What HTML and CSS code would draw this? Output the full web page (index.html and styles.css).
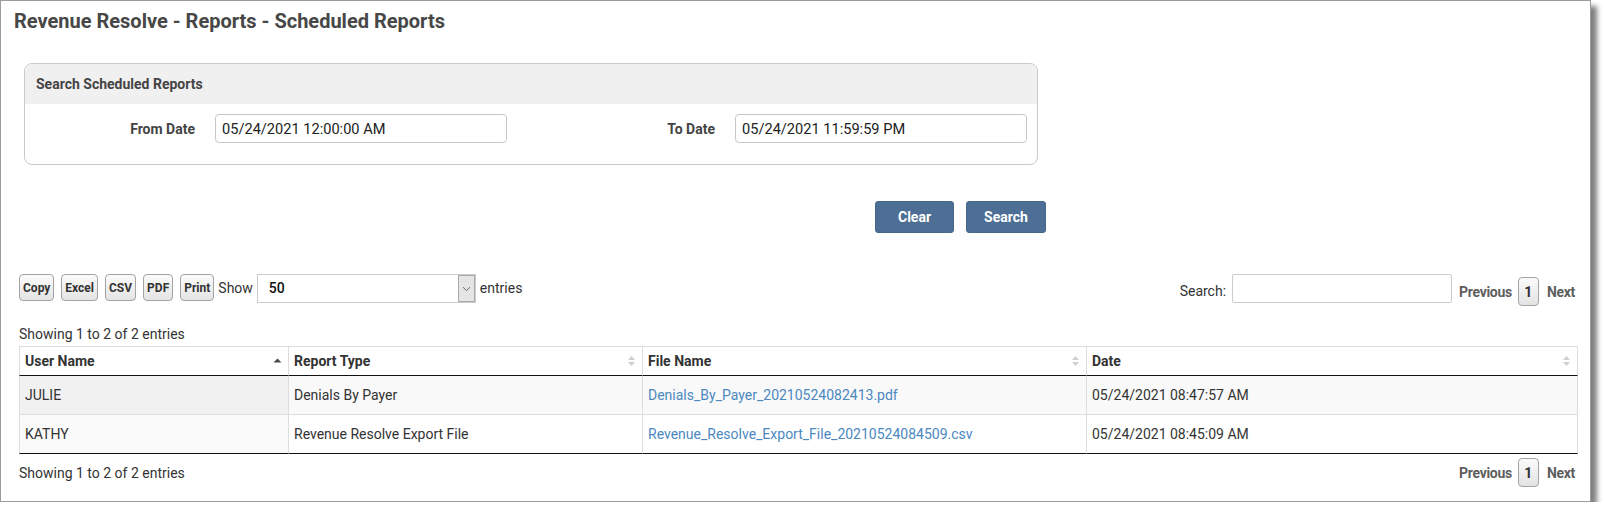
FILE: index.html
```html
<!DOCTYPE html>
<html lang="en">
<head>
<meta charset="utf-8">
<title>Revenue Resolve - Reports - Scheduled Reports</title>
<link rel="stylesheet" href="styles.css">
</head>
<body>
<div class="window">
  <h1 class="page-title">Revenue Resolve - Reports - Scheduled Reports</h1>

  <section class="panel">
    <div class="panel-head">Search Scheduled Reports</div>
    <div class="panel-body">
      <div class="field">
        <label class="field-label">From Date</label>
        <input class="field-input" type="text" value="05/24/2021 12:00:00 AM">
      </div>
      <div class="field">
        <label class="field-label">To Date</label>
        <input class="field-input" type="text" value="05/24/2021 11:59:59 PM">
      </div>
    </div>
  </section>

  <div class="actions">
    <button class="btn-primary btn-clear">Clear</button>
    <button class="btn-primary btn-search">Search</button>
  </div>

  <div class="dt">
    <div class="dt-top">
      <div class="dt-left">
        <button class="dt-btn">Copy</button>
        <button class="dt-btn">Excel</button>
        <button class="dt-btn">CSV</button>
        <button class="dt-btn">PDF</button>
        <button class="dt-btn">Print</button>
        <span class="dt-text show-label">Show</span>
        <div class="select">
          <span class="select-value">50</span>
          <span class="select-arrow">
            <svg width="9" height="6" viewBox="0 0 9 6"><path d="M1 1.2 L4.5 4.6 L8 1.2" fill="none" stroke="#6a6a6a" stroke-width="1"/></svg>
          </span>
        </div>
        <span class="dt-text entries-label">entries</span>
      </div>
      <div class="dt-right">
        <span class="dt-text search-label">Search:</span>
        <input class="search-input" type="text">
        <div class="pager pager-top">
          <span class="pager-link">Previous</span>
          <span class="pager-page">1</span>
          <span class="pager-link">Next</span>
        </div>
      </div>
    </div>

    <div class="dt-info info-top">Showing 1 to 2 of 2 entries</div>

    <table class="grid">
      <colgroup>
        <col class="col-user">
        <col class="col-type">
        <col class="col-file">
        <col class="col-date">
      </colgroup>
      <thead>
        <tr>
          <th class="first"><div class="hcell"><span>User Name</span>
            <svg class="sort" width="9" height="12" viewBox="0 0 9 12"><path d="M0.5 7.5 L4.5 3.5 L8.5 7.5 Z" fill="#4a4a4a"/></svg></div></th>
          <th><div class="hcell"><span>Report Type</span>
            <svg class="sort" width="9" height="12" viewBox="0 0 9 12"><path d="M1 5 L4.5 1 L8 5 Z M1 7 L4.5 11 L8 7 Z" fill="#cfcfcf"/></svg></div></th>
          <th><div class="hcell"><span>File Name</span>
            <svg class="sort" width="9" height="12" viewBox="0 0 9 12"><path d="M1 5 L4.5 1 L8 5 Z M1 7 L4.5 11 L8 7 Z" fill="#cfcfcf"/></svg></div></th>
          <th><div class="hcell"><span>Date</span>
            <svg class="sort" width="9" height="12" viewBox="0 0 9 12"><path d="M1 5 L4.5 1 L8 5 Z M1 7 L4.5 11 L8 7 Z" fill="#cfcfcf"/></svg></div></th>
        </tr>
      </thead>
      <tbody>
        <tr class="odd">
          <td class="first sorted"><div class="cell">JULIE</div></td>
          <td><div class="cell">Denials By Payer</div></td>
          <td><div class="cell"><a class="file-link" href="#">Denials_By_Payer_20210524082413.pdf</a></div></td>
          <td><div class="cell">05/24/2021 08:47:57 AM</div></td>
        </tr>
        <tr class="even">
          <td class="first sorted"><div class="cell">KATHY</div></td>
          <td><div class="cell">Revenue Resolve Export File</div></td>
          <td><div class="cell"><a class="file-link" href="#">Revenue_Resolve_Export_File_20210524084509.csv</a></div></td>
          <td><div class="cell">05/24/2021 08:45:09 AM</div></td>
        </tr>
      </tbody>
    </table>

    <div class="dt-bottom">
      <div class="dt-info">Showing 1 to 2 of 2 entries</div>
      <div class="pager">
        <span class="pager-link">Previous</span>
        <span class="pager-page">1</span>
        <span class="pager-link">Next</span>
      </div>
    </div>
  </div>
</div>
</body>
</html>
```

FILE: styles.css
```css
* { box-sizing: border-box; }

html, body {
  margin: 0;
  padding: 0;
  background: #ffffff;
}

body {
  font-family: Roboto, "Liberation Sans", Arial, sans-serif;
  font-size: 14px;
  color: #333333;
}

.window {
  width: 1591px;
  height: 502px;
  border: 1px solid #9c9c9c;
  background: #ffffff;
  box-shadow: 6px 6px 5px rgba(0, 0, 0, 0.5);
  padding-top: 8px;
}

.page-title {
  margin: 0 0 0 13px;
  font-size: 20px;
  line-height: 24px;
  font-weight: 700;
  color: #474747;
}

/* Search panel */
.panel {
  margin: 30px 0 0 23px;
  width: 1014px;
  border: 1px solid #c9c9c9;
  border-radius: 8px;
  overflow: hidden;
}

.panel-head {
  height: 40px;
  background: #f0f0f0;
  padding-left: 11px;
  display: flex;
  align-items: center;
  font-weight: 700;
  font-size: 14px;
  color: #444444;
}

.panel-body {
  display: flex;
  padding: 10px 0 21px;
}

.field {
  flex: 0 0 520px;
  display: grid;
  grid-template-columns: 170px 292px;
  column-gap: 20px;
  align-items: center;
}

.field-label {
  text-align: right;
  font-weight: 700;
  font-size: 14px;
  color: #444444;
}

.field-input {
  height: 29px;
  width: 292px;
  border: 1px solid #c7c7c7;
  border-radius: 4px;
  padding: 0 6px;
  font-family: Roboto, "Liberation Sans", Arial, sans-serif;
  font-size: 14.6px;
  color: #222222;
  background: #ffffff;
  outline: none;
}

/* Action buttons */
.actions {
  width: 1045px;
  margin-top: 36px;
  display: flex;
  justify-content: flex-end;
  gap: 12px;
}

.btn-primary {
  height: 32px;
  border: 1px solid #466787;
  border-radius: 3px;
  background: #4e6f95;
  color: #ffffff;
  font-family: Roboto, "Liberation Sans", Arial, sans-serif;
  font-size: 14px;
  font-weight: 700;
  padding: 0;
}

.btn-clear { width: 79px; }
.btn-search { width: 80px; }

/* Data table area */
.dt {
  margin: 41px 0 0 18px;
  width: 1559px;
}

.dt-top {
  height: 32px;
  display: flex;
  justify-content: space-between;
  align-items: flex-start;
}

.dt-left {
  display: flex;
  align-items: flex-start;
}

.dt-btn {
  height: 27px;
  margin-right: 7px;
  padding: 0 3px;
  border: 1px solid #a3a3a3;
  border-radius: 4px;
  background: linear-gradient(#fbfbfb, #e4e4e4);
  font-family: Roboto, "Liberation Sans", Arial, sans-serif;
  font-size: 12px;
  font-weight: 700;
  color: #333333;
}

.dt-btn:nth-of-type(5) { margin-right: 4px; }

.dt-text {
  line-height: 29px;
  font-size: 14px;
  color: #333333;
}

.show-label { margin-right: 4px; }
.entries-label { margin-left: 4px; }

.select {
  width: 219px;
  height: 29px;
  border: 1px solid #cccccc;
  background: #ffffff;
  display: flex;
  align-items: stretch;
  justify-content: space-between;
}

.select-value {
  padding-left: 11px;
  line-height: 27px;
  font-size: 14px;
  font-weight: 500;
  color: #111111;
}

.select-arrow {
  width: 17px;
  border: 1px solid #a9a9a9;
  background: #e5e5e5;
  display: flex;
  align-items: center;
  justify-content: center;
}

.dt-right {
  display: flex;
  align-items: flex-start;
}

.search-label {
  margin-top: 3px;
  margin-right: 6px;
}

.search-input {
  width: 220px;
  height: 29px;
  border: 1px solid #cccccc;
  border-radius: 2px;
  margin-right: 7px;
  outline: none;
}

.pager {
  height: 29px;
  display: flex;
  align-items: center;
  padding-right: 3px;
}

.pager-top { margin-top: 3px; }

.pager-link {
  font-weight: 700;
  font-size: 14px;
  color: #5e5e5e;
  letter-spacing: -0.3px;
}

.pager-page {
  width: 21px;
  height: 29px;
  margin: 0 8px 0 6px;
  border: 1px solid #a3a3a3;
  border-radius: 4px;
  background: linear-gradient(#fbfbfb, #e3e3e3);
  display: flex;
  align-items: center;
  justify-content: center;
  font-weight: 700;
  color: #333333;
}

.dt-info {
  line-height: 18px;
  font-size: 14px;
  color: #333333;
}

.info-top {
  margin-top: 19px;
  margin-bottom: 3px;
}

/* Grid */
.grid {
  width: 1559px;
  table-layout: fixed;
  border-collapse: separate;
  border-spacing: 0;
}

.col-user { width: 270px; }
.col-type { width: 354px; }
.col-file { width: 444px; }
.col-date { width: 491px; }

.grid th,
.grid td {
  padding: 0;
  border-right: 1px solid #dddddd;
  text-align: left;
}

.grid th.first,
.grid td.first {
  border-left: 1px solid #dddddd;
}

.grid th {
  border-top: 1px solid #dddddd;
  border-bottom: 1px solid #111111;
  font-weight: 700;
  font-size: 14px;
  color: #333333;
}

.hcell {
  height: 28px;
  display: flex;
  align-items: center;
  justify-content: space-between;
  padding: 0 6px 0 5px;
}

.cell {
  height: 38px;
  display: flex;
  align-items: center;
  padding-left: 5px;
  font-size: 14px;
  color: #333333;
  white-space: nowrap;
}

.grid tr.odd td { background: #f9f9f9; }
.grid tr.odd td.sorted { background: #f1f1f1; }
.grid tr.even td { background: #ffffff; border-top: 1px solid #dddddd; border-bottom: 1px solid #111111; }
.grid tr.even td.sorted { background: #fafafa; }

.file-link {
  color: #4c88bf;
  text-decoration: none;
}

.dt-bottom {
  margin-top: 4px;
  display: flex;
  justify-content: space-between;
  align-items: center;
}
```
